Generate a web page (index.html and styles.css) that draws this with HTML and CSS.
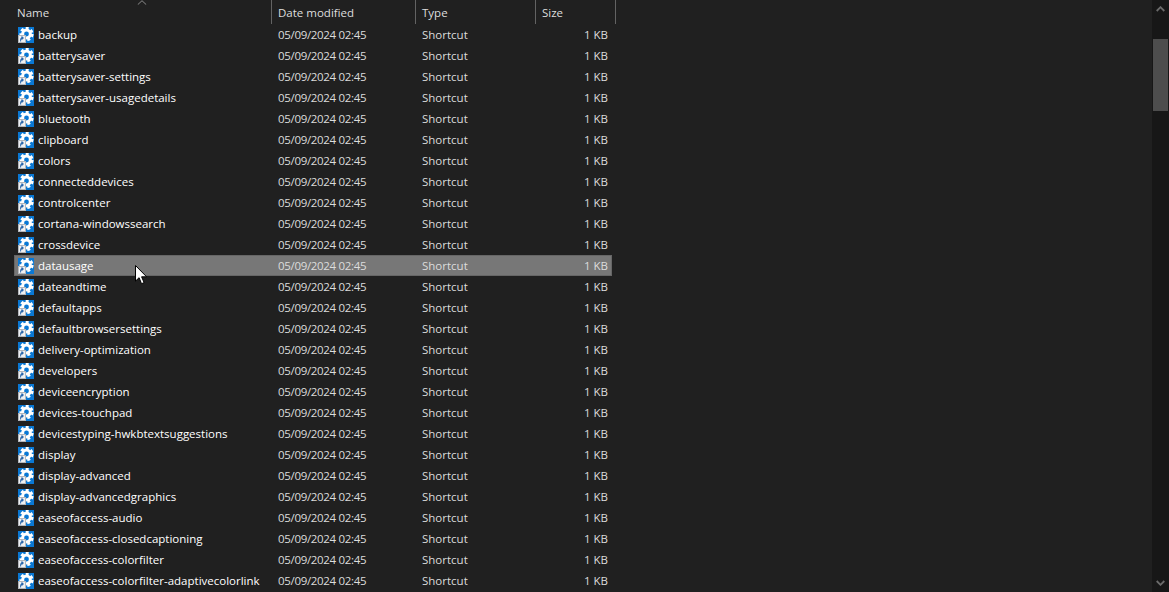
FILE: index.html
```html
<!DOCTYPE html>
<html lang="en">
<head>
<meta charset="utf-8">
<title>Explorer</title>
<link rel="stylesheet" href="styles.css">
</head>
<body>
<svg class="defs" width="0" height="0" aria-hidden="true">
  <symbol id="ico" viewBox="0 0 16 16">
    <rect width="16" height="16" fill="#0a78d4"/>
    <circle cx="8.500" cy="7" r="5.600" fill="none" stroke="#fff" stroke-width="3" stroke-dasharray="2.800 2.200"/>
    <circle cx="8.500" cy="7" r="3.900" fill="none" stroke="#fff" stroke-width="3"/>
    <rect x="0" y="8" width="8" height="8" fill="#b4b7bc"/>
    <rect x="1" y="9" width="6" height="6" fill="#eef0f2"/>
    <path d="M2.600 14.500v-2.300q0-1.200 1.300-1.200M3.800 9.600l1.700 1.400-1.700 1.400z" fill="#1f5fa8" stroke="#1f5fa8" stroke-width=".8"/>
  </symbol>
</svg>
<div class="window">
  <main class="pane">
    <div class="sort-caret"><svg width="10" height="5" viewBox="0 0 10 5"><path d="M.8 4.600 5 .7l4.200 3.900" fill="none" stroke="#8a8a8a"/></svg></div>
    <header class="head">
      <div class="hcell c-name">Name</div>
      <div class="hcell c-date">Date modified</div>
      <div class="hcell c-type">Type</div>
      <div class="hcell c-size">Size</div>
    </header>
    <div class="rows">
      <div class="row"><span class="name"><svg class="ico"><use href="#ico"/></svg>backup</span><span class="date">05/09/2024 02:45</span><span class="type">Shortcut</span><span class="size">1 KB</span></div>
      <div class="row"><span class="name"><svg class="ico"><use href="#ico"/></svg>batterysaver</span><span class="date">05/09/2024 02:45</span><span class="type">Shortcut</span><span class="size">1 KB</span></div>
      <div class="row"><span class="name"><svg class="ico"><use href="#ico"/></svg>batterysaver-settings</span><span class="date">05/09/2024 02:45</span><span class="type">Shortcut</span><span class="size">1 KB</span></div>
      <div class="row"><span class="name"><svg class="ico"><use href="#ico"/></svg>batterysaver-usagedetails</span><span class="date">05/09/2024 02:45</span><span class="type">Shortcut</span><span class="size">1 KB</span></div>
      <div class="row"><span class="name"><svg class="ico"><use href="#ico"/></svg>bluetooth</span><span class="date">05/09/2024 02:45</span><span class="type">Shortcut</span><span class="size">1 KB</span></div>
      <div class="row"><span class="name"><svg class="ico"><use href="#ico"/></svg>clipboard</span><span class="date">05/09/2024 02:45</span><span class="type">Shortcut</span><span class="size">1 KB</span></div>
      <div class="row"><span class="name"><svg class="ico"><use href="#ico"/></svg>colors</span><span class="date">05/09/2024 02:45</span><span class="type">Shortcut</span><span class="size">1 KB</span></div>
      <div class="row"><span class="name"><svg class="ico"><use href="#ico"/></svg>connecteddevices</span><span class="date">05/09/2024 02:45</span><span class="type">Shortcut</span><span class="size">1 KB</span></div>
      <div class="row"><span class="name"><svg class="ico"><use href="#ico"/></svg>controlcenter</span><span class="date">05/09/2024 02:45</span><span class="type">Shortcut</span><span class="size">1 KB</span></div>
      <div class="row"><span class="name"><svg class="ico"><use href="#ico"/></svg>cortana-windowssearch</span><span class="date">05/09/2024 02:45</span><span class="type">Shortcut</span><span class="size">1 KB</span></div>
      <div class="row"><span class="name"><svg class="ico"><use href="#ico"/></svg>crossdevice</span><span class="date">05/09/2024 02:45</span><span class="type">Shortcut</span><span class="size">1 KB</span></div>
      <div class="row row-hover"><span class="name"><svg class="ico"><use href="#ico"/></svg>datausage</span><span class="date">05/09/2024 02:45</span><span class="type">Shortcut</span><span class="size">1 KB</span></div>
      <div class="row"><span class="name"><svg class="ico"><use href="#ico"/></svg>dateandtime</span><span class="date">05/09/2024 02:45</span><span class="type">Shortcut</span><span class="size">1 KB</span></div>
      <div class="row"><span class="name"><svg class="ico"><use href="#ico"/></svg>defaultapps</span><span class="date">05/09/2024 02:45</span><span class="type">Shortcut</span><span class="size">1 KB</span></div>
      <div class="row"><span class="name"><svg class="ico"><use href="#ico"/></svg>defaultbrowsersettings</span><span class="date">05/09/2024 02:45</span><span class="type">Shortcut</span><span class="size">1 KB</span></div>
      <div class="row"><span class="name"><svg class="ico"><use href="#ico"/></svg>delivery-optimization</span><span class="date">05/09/2024 02:45</span><span class="type">Shortcut</span><span class="size">1 KB</span></div>
      <div class="row"><span class="name"><svg class="ico"><use href="#ico"/></svg>developers</span><span class="date">05/09/2024 02:45</span><span class="type">Shortcut</span><span class="size">1 KB</span></div>
      <div class="row"><span class="name"><svg class="ico"><use href="#ico"/></svg>deviceencryption</span><span class="date">05/09/2024 02:45</span><span class="type">Shortcut</span><span class="size">1 KB</span></div>
      <div class="row"><span class="name"><svg class="ico"><use href="#ico"/></svg>devices-touchpad</span><span class="date">05/09/2024 02:45</span><span class="type">Shortcut</span><span class="size">1 KB</span></div>
      <div class="row"><span class="name"><svg class="ico"><use href="#ico"/></svg>devicestyping-hwkbtextsuggestions</span><span class="date">05/09/2024 02:45</span><span class="type">Shortcut</span><span class="size">1 KB</span></div>
      <div class="row"><span class="name"><svg class="ico"><use href="#ico"/></svg>display</span><span class="date">05/09/2024 02:45</span><span class="type">Shortcut</span><span class="size">1 KB</span></div>
      <div class="row"><span class="name"><svg class="ico"><use href="#ico"/></svg>display-advanced</span><span class="date">05/09/2024 02:45</span><span class="type">Shortcut</span><span class="size">1 KB</span></div>
      <div class="row"><span class="name"><svg class="ico"><use href="#ico"/></svg>display-advancedgraphics</span><span class="date">05/09/2024 02:45</span><span class="type">Shortcut</span><span class="size">1 KB</span></div>
      <div class="row"><span class="name"><svg class="ico"><use href="#ico"/></svg>easeofaccess-audio</span><span class="date">05/09/2024 02:45</span><span class="type">Shortcut</span><span class="size">1 KB</span></div>
      <div class="row"><span class="name"><svg class="ico"><use href="#ico"/></svg>easeofaccess-closedcaptioning</span><span class="date">05/09/2024 02:45</span><span class="type">Shortcut</span><span class="size">1 KB</span></div>
      <div class="row"><span class="name"><svg class="ico"><use href="#ico"/></svg>easeofaccess-colorfilter</span><span class="date">05/09/2024 02:45</span><span class="type">Shortcut</span><span class="size">1 KB</span></div>
      <div class="row"><span class="name"><svg class="ico"><use href="#ico"/></svg>easeofaccess-colorfilter-adaptivecolorlink</span><span class="date">05/09/2024 02:45</span><span class="type">Shortcut</span><span class="size">1 KB</span></div>
    </div>
    <svg class="cursor" width="13" height="20" viewBox="0 0 13 20"><path d="M.5.5v15.600l3.600-3.400 2.400 6 2.600-1.100-2.500-5.800h5z" fill="#fff" stroke="#000"/></svg>
  </main>
  <aside class="scrollbar">
    <svg class="arrow" width="9" height="6" viewBox="0 0 9 6"><path d="M.7 5 4.500 1.200 8.300 5" fill="none" stroke="#6b6b6b" stroke-width="1.800"/></svg>
    <div class="track"><div class="thumb"></div></div>
    <svg class="arrow" width="9" height="6" viewBox="0 0 9 6"><path d="M.7 1 4.500 4.800 8.300 1" fill="none" stroke="#6b6b6b" stroke-width="1.800"/></svg>
  </aside>
</div>
</body>
</html>
```
FILE: styles.css
```css
* { box-sizing: border-box; }
html, body { margin: 0; height: 100%; overflow: hidden; background: #202020; }
.defs { position: absolute; }
.window {
  display: flex;
  height: 592px;
  font-family: "Open Sans", "Noto Sans", sans-serif;
  font-size: 11.5px;
  color: #fff;
}
.pane { flex: 1; position: relative; min-width: 0; overflow: hidden; }
.sort-caret { position: absolute; left: 137px; top: 0; line-height: 0; }
.head { display: flex; height: 24px; }
.hcell {
  height: 24px;
  padding: 5px 0 0 6px;
  line-height: 16px;
  color: #dedede;
  border-right: 1px solid #636363;
}
.c-name { width: 272px; padding-left: 17px; }
.c-date { width: 144px; }
.c-type { width: 120px; }
.c-size { width: 80px; }
.rows { margin-left: 14px; width: 598px; }
.row { display: flex; align-items: center; height: 21px; color: #fff; }
.row-hover { background: #777; box-shadow: inset 0 0 0 1px #666; }
.name { width: 258px; padding-left: 4px; display: flex; align-items: center; gap: 4px; white-space: nowrap; }
.ico { width: 16px; height: 16px; flex: none; }
.date { width: 144px; padding-left: 6px; color: #dcdcdc; letter-spacing: -.32px; }
.type { width: 120px; padding-left: 6px; color: #dcdcdc; }
.size { width: 76px; text-align: right; padding-right: 4px; color: #dcdcdc; }
.cursor { position: absolute; left: 135px; top: 265px; }
.scrollbar {
  width: 17px;
  flex: none;
  background: #171717;
  display: flex;
  flex-direction: column;
  align-items: center;
  padding: 6px 0;
}
.track { flex: 1; width: 100%; padding-top: 27px; }
.thumb { width: 15px; height: 72px; margin-left: 1px; background: #4d4d4d; }
```
